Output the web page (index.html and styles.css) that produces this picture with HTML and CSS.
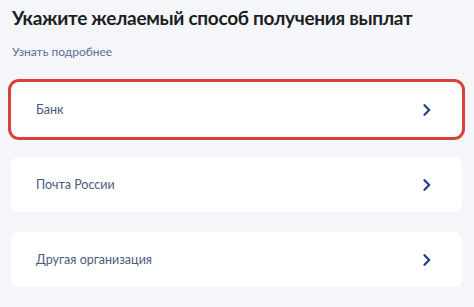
FILE: index.html
```html
<!DOCTYPE html>
<html lang="ru">
<head>
<meta charset="utf-8">
<link rel="stylesheet" href="styles.css">
</head>
<body>
<div class="page">
  <h1 class="title">Укажите желаемый способ получения выплат</h1>
  <a class="more">Узнать подробнее</a>
  <div class="list">
    <div class="card selected">
      <span class="label">Банк</span>
      <svg class="chev" width="8" height="12" viewBox="0 0 8 12"><path d="M1.5 1.2 L6.2 6 L1.5 10.8" fill="none" stroke="#213e80" stroke-width="2.2" stroke-linecap="round" stroke-linejoin="round"/></svg>
    </div>
    <div class="card">
      <span class="label">Почта России</span>
      <svg class="chev" width="8" height="12" viewBox="0 0 8 12"><path d="M1.5 1.2 L6.2 6 L1.5 10.8" fill="none" stroke="#213e80" stroke-width="2.2" stroke-linecap="round" stroke-linejoin="round"/></svg>
    </div>
    <div class="card">
      <span class="label">Другая организация</span>
      <svg class="chev" width="8" height="12" viewBox="0 0 8 12"><path d="M1.5 1.2 L6.2 6 L1.5 10.8" fill="none" stroke="#213e80" stroke-width="2.2" stroke-linecap="round" stroke-linejoin="round"/></svg>
    </div>
  </div>
</div>
</body>
</html>
```
FILE: styles.css
```css
html, body {
  margin: 0;
  padding: 0;
  background: #f4f6fa;
}
.page {
  padding: 5px 12px 0 11px;
  font-family: Lato, "Open Sans", sans-serif;
  display: flex;
  flex-direction: column;
}
.title {
  margin: 0 0 0 1px;
  font-size: 19px;
  line-height: 26px;
  font-weight: 700;
  color: #1c1e23;
  letter-spacing: -0.3px;
  white-space: nowrap;
}
.more {
  margin: 13px 0 0 1px;
  font-size: 12px;
  line-height: 16px;
  color: #5d6f95;
}
.list {
  margin-top: 22px;
  display: flex;
  flex-direction: column;
  gap: 20px;
}
.card {
  height: 55px;
  background: #fff;
  border-radius: 8px;
  display: flex;
  align-items: center;
  justify-content: space-between;
  padding: 0 31px 0 25px;
}
.card.selected {
  box-shadow: 0 0 0 3px #d8403a;
}
.label {
  font-size: 12.5px;
  color: #4a5a7e;
}
.chev {
  display: block;
}
```
